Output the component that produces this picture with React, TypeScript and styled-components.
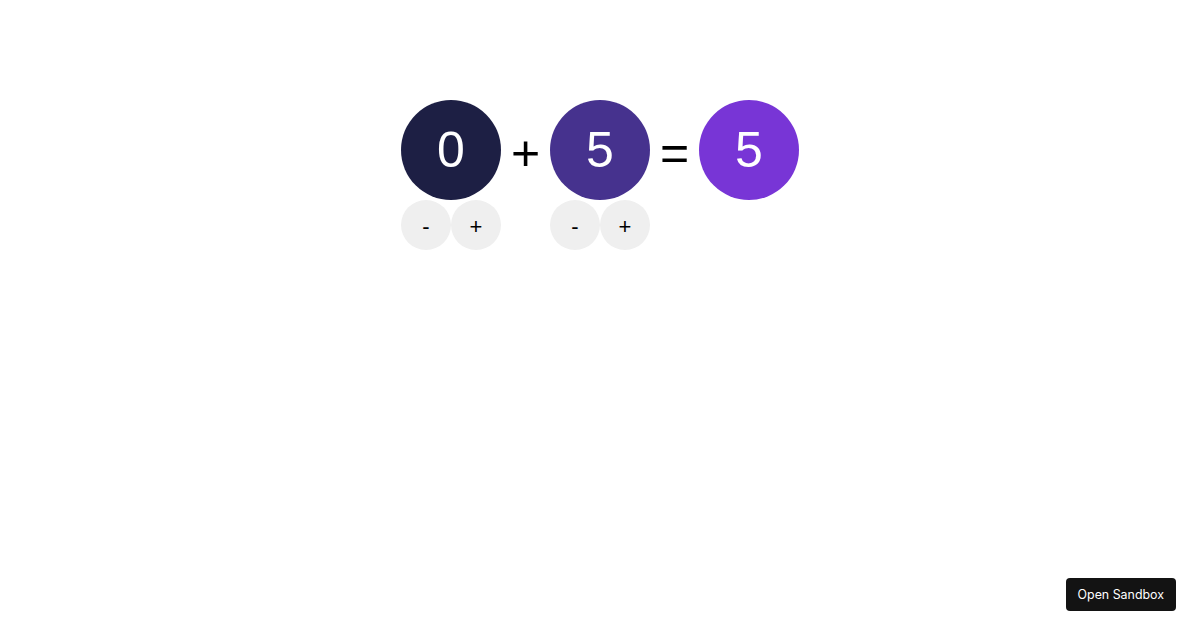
import styled, { createGlobalStyle } from 'styled-components';
import { useState } from 'react';

const GlobalStyle = createGlobalStyle`
    html, body {
        margin: 0;
        padding: 0;
        background: #ffffff;
        font-family: 'Liberation Sans', Arial, sans-serif;
    }
`;

const Page = styled.div`
    width: 100%;
    height: 630px;
    display: flex;
    justify-content: center;
    padding-top: 100px;
    box-sizing: border-box;
`;

const Equation = styled.div`
    display: flex;
    align-items: flex-start;
`;

const Term = styled.div`
    display: flex;
    flex-direction: column;
`;

const Ball = styled.div<{ $color: string }>`
    width: 100px;
    height: 100px;
    border-radius: 50%;
    background: ${(p) => p.$color};
    color: #ffffff;
    display: flex;
    align-items: center;
    justify-content: center;
    font-size: 50px;
`;

const Operator = styled.div`
    width: 49px;
    height: 100px;
    display: flex;
    align-items: center;
    justify-content: center;
    font-size: 50px;
    color: #000000;
    padding-top: 6px;
    box-sizing: border-box;
`;

const Controls = styled.div`
    display: flex;
`;

const RoundButton = styled.button`
    width: 50px;
    height: 50px;
    border-radius: 50%;
    border: none;
    background: #efefef;
    color: #000000;
    font-family: 'Liberation Sans', Arial, sans-serif;
    font-size: 22px;
    padding: 4px 0 0;
    box-sizing: border-box;
    display: flex;
    align-items: center;
    justify-content: center;
    cursor: pointer;
`;

const SandboxButton = styled.button`
    position: fixed;
    right: 24px;
    bottom: 19px;
    height: 33px;
    padding: 0 12px;
    border: none;
    border-radius: 4px;
    background: #131313;
    color: #ffffff;
    font-family: Inter, 'Liberation Sans', sans-serif;
    font-size: 12.4px;
    cursor: pointer;
`;

const Counter = ({
    value,
    color,
    onChange,
}: {
    value: number;
    color: string;
    onChange: (v: number) => void;
}) => (
    <Term>
        <Ball $color={color}>{value}</Ball>
        <Controls>
            <RoundButton onClick={() => onChange(value - 1)}>-</RoundButton>
            <RoundButton onClick={() => onChange(value + 1)}>+</RoundButton>
        </Controls>
    </Term>
);

export default function App() {
    const [a, setA] = useState(0);
    const [b, setB] = useState(5);

    return (
        <>
            <GlobalStyle />
            <Page>
                <Equation>
                    <Counter value={a} color="#1d1f44" onChange={setA} />
                    <Operator>+</Operator>
                    <Counter value={b} color="#46328e" onChange={setB} />
                    <Operator>=</Operator>
                    <Term>
                        <Ball $color="#7835d6">{a + b}</Ball>
                    </Term>
                </Equation>
            </Page>
            <SandboxButton>Open Sandbox</SandboxButton>
        </>
    );
}
